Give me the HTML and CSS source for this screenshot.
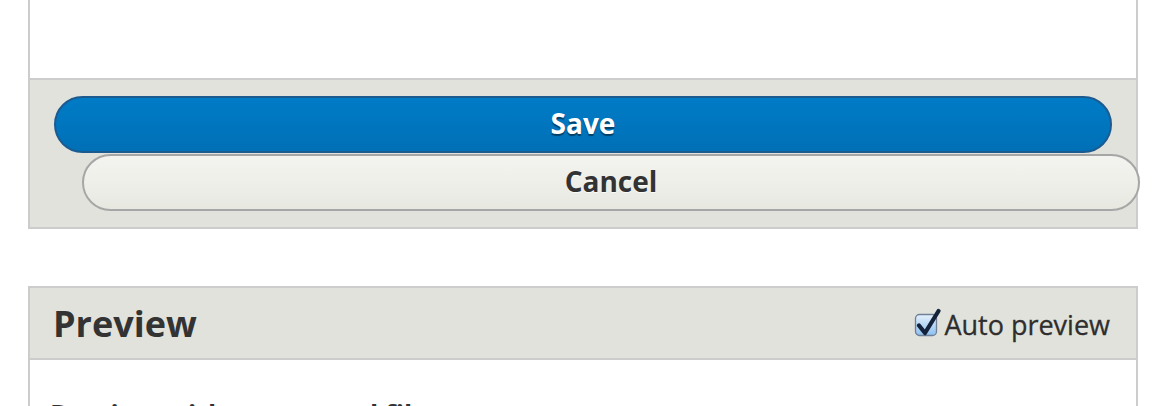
FILE: index.html
```html
<!DOCTYPE html>
<html>
<head>
<meta charset="utf-8">
<link rel="stylesheet" href="styles.css">
</head>
<body>
<div class="page">
  <div class="panel edit-panel">
    <div class="panel-content"></div>
    <div class="actions">
      <button class="button button-primary" type="button">Save</button>
      <button class="button button-secondary" type="button">Cancel</button>
    </div>
  </div>

  <div class="panel preview-panel">
    <div class="preview-header">
      <h2 class="preview-title">Preview</h2>
      <label class="auto-preview">
        <svg class="checkbox" width="27" height="29" viewBox="0 0 27 29" aria-hidden="true">
          <defs>
            <linearGradient id="cbfill" x1="0" y1="0" x2="0" y2="1">
              <stop offset="0" stop-color="#e6f1fc"/>
              <stop offset="0.5" stop-color="#b9d8f6"/>
              <stop offset="1" stop-color="#8cc0f0"/>
            </linearGradient>
          </defs>
          <rect x="1.5" y="6.5" width="21" height="21" rx="4" ry="4" fill="url(#cbfill)" stroke="#6f7f96" stroke-width="1.3"/>
          <path d="M5 17.5 L11 25 L24.5 3" fill="none" stroke="#14233b" stroke-width="4.2" stroke-linecap="round" stroke-linejoin="round"/>
        </svg>
        <span>Auto preview</span>
      </label>
    </div>
    <div class="preview-body">
      <div class="field-label">Preview with contextual filters:</div>
    </div>
  </div>
</div>
</body>
</html>
```
FILE: styles.css
```css
html, body {
  margin: 0;
  padding: 0;
  background: #ffffff;
}

body {
  font-family: "Open Sans", "DejaVu Sans", sans-serif;
  color: #333333;
  overflow: hidden;
}

.page {
  padding: 0 24px 0 28px;
}

.panel {
  border: 2px solid #cccccc;
  background: #ffffff;
}

.edit-panel {
  border-top: none;
}

.panel-content {
  height: 78px;
}

.actions {
  background: #e1e2dc;
  border-top: 2px solid #cccccc;
  padding: 16px 24px 16px 24px;
}

.button {
  display: block;
  box-sizing: border-box;
  width: 100%;
  height: 57px;
  border-radius: 29px;
  font-family: "Open Sans", "DejaVu Sans", sans-serif;
  font-weight: 700;
  font-size: 28px;
  line-height: 1;
  padding: 0 0 4px 0;
  margin: 0;
  cursor: pointer;
}

.button-primary {
  color: #ffffff;
  background: linear-gradient(to bottom, #007bc6 0%, #0076bf 50%, #0070b6 100%);
  border: 2px solid #1c5b90;
  text-shadow: 0 2px 1px rgba(0, 0, 0, 0.45);
}

.button-secondary {
  margin: 1px 0 0 28px;
  color: #333333;
  background: linear-gradient(to bottom, #f3f4ef 0%, #efefea 50%, #e8e8e1 100%);
  border: 2px solid #a6a6a6;
  text-shadow: 0 1px 0 rgba(255, 255, 255, 0.8);
}

.preview-panel {
  margin-top: 57px;
}

.preview-header {
  display: flex;
  align-items: center;
  justify-content: space-between;
  height: 72px;
  box-sizing: border-box;
  padding: 2px 26px 0 23px;
  background: #e1e2dc;
  border-bottom: 2px solid #cccccc;
}

.preview-title {
  margin: 0;
  font-size: 36px;
  font-weight: 700;
  line-height: 1.2;
  color: #333333;
}

.auto-preview {
  display: flex;
  align-items: center;
  gap: 3px;
  font-size: 27px;
  font-weight: 400;
  color: #2e2e2e;
  letter-spacing: 0;
  -webkit-text-stroke: 0.3px #2e2e2e;
}

.checkbox {
  display: block;
  margin-top: -3px;
}

.preview-body {
  padding: 35px 20px 20px 20px;
}

.field-label {
  font-size: 27px;
  font-weight: 700;
  color: #333333;
}
```
